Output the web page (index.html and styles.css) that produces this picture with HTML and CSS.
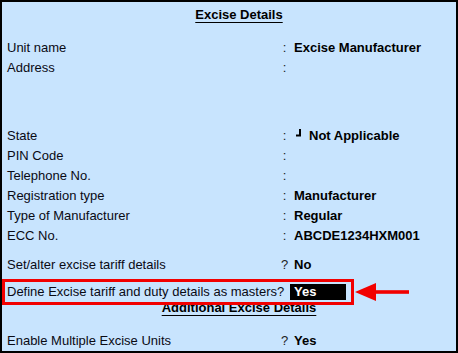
FILE: index.html
```html
<!DOCTYPE html>
<html>
<head>
<meta charset="utf-8">
<link rel="stylesheet" href="styles.css">
</head>
<body>
<div class="frame">
  <div class="title"><span>Excise Details</span></div>

  <div class="group g-unit">
    <div class="row"><span class="label">Unit name</span><span class="mark">:</span><span class="value">Excise Manufacturer</span></div>
    <div class="row"><span class="label">Address</span><span class="mark">:</span><span class="value"></span></div>
  </div>

  <div class="group g-state">
    <div class="row"><span class="label">State</span><span class="mark">:</span><span class="value"><svg class="corner" width="7" height="9" viewBox="0 0 7 9"><path d="M5 1 V7.5 H1" fill="none" stroke="#000" stroke-width="2"/></svg>Not Applicable</span></div>
    <div class="row"><span class="label">PIN Code</span><span class="mark">:</span><span class="value"></span></div>
    <div class="row"><span class="label">Telephone No.</span><span class="mark">:</span><span class="value"></span></div>
    <div class="row"><span class="label">Registration type</span><span class="mark">:</span><span class="value">Manufacturer</span></div>
    <div class="row"><span class="label">Type of Manufacturer</span><span class="mark">:</span><span class="value">Regular</span></div>
    <div class="row"><span class="label">ECC No.</span><span class="mark">:</span><span class="value">ABCDE1234HXM001</span></div>
  </div>

  <div class="row g-set"><span class="label">Set/alter excise tariff details</span><span class="mark">?</span><span class="value">No</span></div>

  <div class="define"><span class="label">Define Excise tariff and duty details as masters?</span><span class="hl">Yes</span></div>

  <div class="title sub"><span>Additional Excise Details</span></div>

  <div class="row g-enable"><span class="label">Enable Multiple Excise Units</span><span class="mark">?</span><span class="value">Yes</span></div>

  <div class="callout"></div>
  <svg class="arrow" width="55" height="20" viewBox="0 0 55 20">
    <polygon points="0,10 21,1 21,19" fill="#f20000"/>
    <rect x="20" y="8.2" width="34" height="3.6" fill="#f20000"/>
  </svg>
</div>
</body>
</html>
```

FILE: styles.css
```css
html, body {
  margin: 0;
  padding: 0;
  background: #c8e4fe;
}

.frame {
  position: relative;
  width: 458px;
  height: 353px;
  box-sizing: border-box;
  border: 2px solid #000;
  padding: 3px 0 0 5px;
  background: #c8e4fe;
  font-family: "Liberation Sans", Arial, sans-serif;
  font-size: 13px;
  color: #000;
  overflow: hidden;
}

.title {
  height: 20px;
  line-height: 20px;
  padding-left: 15px;
  text-align: center;
  font-weight: bold;
}

.title span {
  text-decoration: underline;
  text-decoration-thickness: 1px;
  text-underline-offset: 3px;
}

.row {
  display: grid;
  grid-template-columns: 273px 9px 1fr;
  height: 20px;
  line-height: 20px;
}

.label {
  white-space: nowrap;
  color: #0a0a14;
}

.mark {
  text-align: center;
  color: #222;
}

.value {
  padding-left: 5px;
  font-weight: bold;
  white-space: nowrap;
  display: flex;
  align-items: center;
}

.corner {
  margin: -8px 7px 0 1px;
}

.g-unit { margin-top: 13px; }
.g-state { margin-top: 48px; }
.g-set { margin-top: 9px; }

.define {
  display: grid;
  grid-template-columns: 283px 56px;
  align-items: center;
  height: 20px;
  line-height: 20px;
  margin-top: 7px;
}

.hl {
  height: 16px;
  line-height: 16px;
  background: #000;
  color: #fff;
  font-weight: bold;
  padding-left: 4px;
}

.sub { margin-top: -4px; }
.g-enable { margin-top: 13px; }

.callout {
  position: absolute;
  left: 0;
  top: 277px;
  width: 352px;
  height: 26px;
  box-sizing: border-box;
  border: 3px solid #f20000;
}

.arrow {
  position: absolute;
  left: 353px;
  top: 280px;
}
```
